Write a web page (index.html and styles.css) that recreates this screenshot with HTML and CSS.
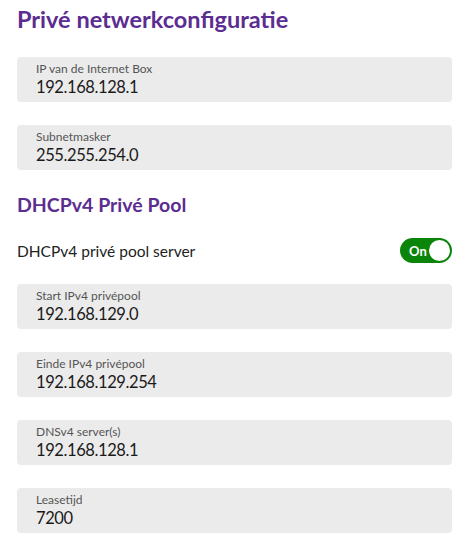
FILE: index.html
```html
<!DOCTYPE html>
<html lang="nl">
<head>
    <meta charset="UTF-8">
    <meta name="viewport" content="width=device-width, initial-scale=1.0">
    <title>Privé netwerkconfiguratie</title>
    <link rel="stylesheet" href="styles.css">
</head>
<body>
    <div class="page">
        <h1 class="page-title">Privé netwerkconfiguratie</h1>

        <div class="field">
            <span class="field-label">IP van de Internet Box</span>
            <span class="field-value">192.168.128.1</span>
        </div>

        <div class="field">
            <span class="field-label">Subnetmasker</span>
            <span class="field-value">255.255.254.0</span>
        </div>

        <h2 class="section-title">DHCPv4 Privé Pool</h2>

        <div class="switch-row">
            <span class="switch-label">DHCPv4 privé pool server</span>
            <button class="switch on" type="button">
                <span class="switch-text">On</span>
                <span class="switch-knob"></span>
            </button>
        </div>

        <div class="field">
            <span class="field-label">Start IPv4 privépool</span>
            <span class="field-value">192.168.129.0</span>
        </div>

        <div class="field">
            <span class="field-label">Einde IPv4 privépool</span>
            <span class="field-value">192.168.129.254</span>
        </div>

        <div class="field">
            <span class="field-label">DNSv4 server(s)</span>
            <span class="field-value">192.168.128.1</span>
        </div>

        <div class="field">
            <span class="field-label">Leasetijd</span>
            <span class="field-value">7200</span>
        </div>
    </div>
</body>
</html>
```

FILE: styles.css
```css
* {
    box-sizing: border-box;
    margin: 0;
    padding: 0;
}

body {
    font-family: 'Lato', 'Noto Sans', sans-serif;
    background-color: #fff;
    color: #222;
}

.page {
    padding: 4px 22px 0 17px;
}

.page-title {
    font-size: 23.5px;
    line-height: 30px;
    font-weight: 700;
    color: #5c2d91;
    margin-bottom: 23px;
}

.section-title {
    font-size: 19.5px;
    line-height: 24px;
    font-weight: 700;
    color: #5c2d91;
    margin: 21px 0 21px;
}

.field {
    display: flex;
    flex-direction: column;
    height: 45px;
    padding: 5px 19px 0;
    background-color: #ebebeb;
    border-radius: 4px;
    margin-bottom: 23px;
}

.field-label {
    font-size: 12px;
    line-height: 13px;
    color: #555;
}

.field-value {
    font-size: 16.5px;
    line-height: 20px;
    letter-spacing: -0.4px;
    color: #1a1a1a;
    margin-top: 2px;
}

.switch-row {
    display: flex;
    align-items: center;
    justify-content: space-between;
    margin-bottom: 21px;
}

.switch-label {
    font-size: 15.5px;
    line-height: 24px;
}

.switch {
    display: flex;
    align-items: center;
    justify-content: space-between;
    width: 52px;
    height: 25px;
    padding: 0 2px 0 9px;
    border: none;
    border-radius: 13px;
    background-color: #0a850a;
    cursor: pointer;
}

.switch-text {
    font-family: 'Lato', sans-serif;
    font-size: 13px;
    font-weight: 700;
    color: #fff;
}

.switch-knob {
    width: 21px;
    height: 21px;
    border-radius: 50%;
    background-color: #fff;
}
```
